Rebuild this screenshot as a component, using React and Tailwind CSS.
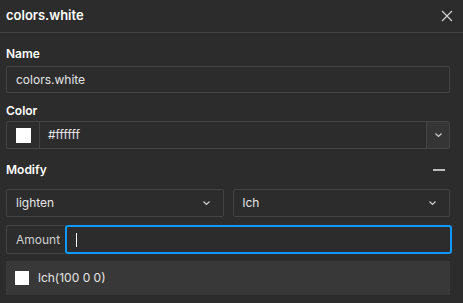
function Chevron() {
  return (
    <svg width="9" height="6" viewBox="0 0 9 6" fill="none">
      <path d="M1.5 1.5L4.5 4.5L7.5 1.5" stroke="#cfcfcf" strokeWidth="1.2" />
    </svg>
  );
}

function Select({ value }) {
  return (
    <div className="flex-1 h-[28px] flex items-center justify-between pl-[9px] pr-[12px] border border-[#444] rounded-[2px] text-[12px] text-[#e6e6e6]">
      <span>{value}</span>
      <Chevron />
    </div>
  );
}

export default function App() {
  return (
    <div
      className="w-[463px] h-[303px] bg-[#2c2c2c] text-white overflow-hidden"
      style={{ fontFamily: "Inter, 'Noto Sans', sans-serif" }}
    >
      <div className="h-[33px] flex items-center justify-between pl-[6px] pr-[10px] border-b border-[#444]">
        <h1 className="text-[13px] font-semibold">colors.white</h1>
        <svg width="12" height="12" viewBox="0 0 12 12" fill="none">
          <path d="M1 1L11 11M11 1L1 11" stroke="#d8d8d8" strokeWidth="1.1" />
        </svg>
      </div>

      <div className="px-[6px] pr-[13px] pt-[11px] flex flex-col">
        <label className="text-[12px] font-semibold h-[20px] flex items-center">Name</label>
        <div className="mt-[2px] h-[27px] flex items-center pl-[9px] border border-[#444] rounded-[2px] text-[12px] text-[#e6e6e6]">
          colors.white
        </div>

        <label className="mt-[8px] text-[12px] font-semibold h-[20px] flex items-center">Color</label>
        <div className="h-[28px] flex border border-[#444] rounded-[2px] text-[12px] text-[#e6e6e6]">
          <div className="w-[33px] flex items-center justify-center border-r border-[#444]">
            <div className="w-[15px] h-[15px] bg-white" />
          </div>
          <div className="flex-1 flex items-center pl-[8px]">#ffffff</div>
          <div className="w-[23px] flex items-center justify-center bg-[#353535] border-l border-[#444]">
            <Chevron />
          </div>
        </div>

        <div className="mt-[11px] h-[20px] flex items-center justify-between">
          <span className="text-[12px] font-semibold">Modify</span>
          <div className="w-[12px] h-[2px] bg-[#bdbdbd] mr-[5px]" />
        </div>

        <div className="mt-[9px] flex gap-[9px]">
          <Select value="lighten" />
          <Select value="lch" />
        </div>

        <div className="mt-[8px] h-[29px] flex mr-[-2px]">
          <div className="w-[59px] flex items-center pl-[9px] border border-[#444] border-r-0 rounded-l-[2px] text-[12px] text-[#cfcfcf]">
            Amount
          </div>
          <div className="flex-1 flex items-center border-2 border-[#0d99ff] rounded-[3px] pl-[9px]">
            <span className="w-[1px] h-[14px] bg-white" />
          </div>
        </div>

        <div className="mt-[7px] h-[34px] flex items-center gap-[9px] pl-[9px] bg-[#383838] text-[12px] text-[#e6e6e6]">
          <div className="w-[14px] h-[14px] bg-white" />
          <span>lch(100 0 0)</span>
        </div>
      </div>
    </div>
  );
}
